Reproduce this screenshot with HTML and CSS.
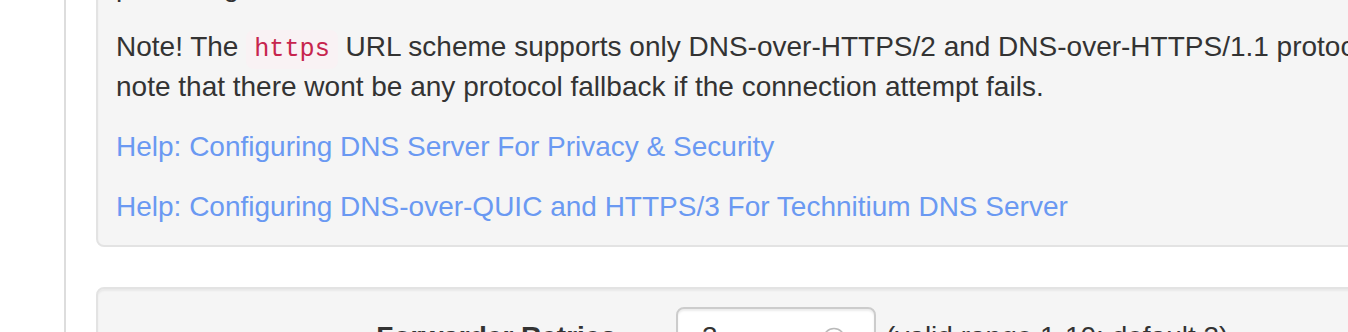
FILE: index.html
```html
<!DOCTYPE html>
<html lang="en">
<head>
<meta charset="utf-8">
<title>DNS Settings</title>
<link rel="stylesheet" href="styles.css">
</head>
<body>
<div class="page">
  <aside class="sidebar"></aside>
  <main class="main">
    <div class="scroll">
      <section class="well">
        <p>protocol given in the forwarder URL scheme.</p>
        <p>Note! The <code>https</code> URL scheme supports only DNS-over-HTTPS/2 and DNS-over-HTTPS/1.1 protocols. The <code>h3</code> URL scheme supports only DNS-over-HTTPS/3 protocol. Please<br>note that there wont be any protocol fallback if the connection attempt fails.</p>
        <p><a href="#">Help: Configuring DNS Server For Privacy &amp; Security</a></p>
        <p class="last"><a href="#">Help: Configuring DNS-over-QUIC and HTTPS/3 For Technitium DNS Server</a></p>
      </section>
      <section class="well">
        <div class="form-row">
          <label class="control-label" for="retries">Forwarder Retries</label>
          <div class="input" id="retries">
            <span class="value">3</span>
            <svg class="spin" width="24" height="24" viewBox="0 0 24 24" aria-hidden="true">
              <circle cx="12" cy="12" r="10.5" fill="#fff" stroke="#b9b9b9" stroke-width="1.5"/>
              <path d="M8 10.5 L12 6.5 L16 10.5" fill="none" stroke="#333" stroke-width="2"/>
              <path d="M8 13.5 L12 17.5 L16 13.5" fill="none" stroke="#333" stroke-width="2"/>
            </svg>
          </div>
          <div class="help-text">(valid range 1-10; default 3)</div>
        </div>
      </section>
    </div>
  </main>
</div>
</body>
</html>
```

FILE: styles.css
```css
html, body {
  margin: 0;
  padding: 0;
  background: #ffffff;
  overflow: hidden;
}

body {
  font-family: "Liberation Sans", Arial, Helvetica, sans-serif;
  font-size: 28px;
  line-height: 40px;
  color: #333333;
}

.page {
  display: flex;
  height: 332px;
  overflow: hidden;
}

.sidebar {
  flex: 0 0 64px;
  border-right: 2px solid #dddddd;
}

.main {
  flex: 0 0 auto;
  padding-left: 30px;
}

.scroll {
  margin-top: -53px;
  width: 2520px;
}

.well {
  background: #f5f5f5;
  border: 2px solid #e3e3e3;
  border-radius: 8px;
  box-shadow: inset 0 2px 2px rgba(0, 0, 0, 0.05);
  padding: 18px;
  margin-bottom: 40px;
}

.well p {
  margin: 0 0 20px;
}

.well p.last {
  margin-bottom: 0;
}

code {
  font-family: "Liberation Mono", Menlo, monospace;
  font-size: 25.2px;
  line-height: 1;
  color: #c7254e;
  background: #f9f2f4;
  padding: 5px 8px;
  border-radius: 8px;
}

a {
  color: #6a99f2;
  text-decoration: none;
}

.form-row {
  display: grid;
  grid-template-columns: 500px 200px auto;
  column-gap: 60px;
  align-items: start;
}

.control-label {
  font-weight: bold;
  text-align: right;
  padding-top: 10px;
}

.form-row .help-text {
  margin-left: -50px;
  padding-top: 10px;
}

.input {
  box-sizing: border-box;
  height: 68px;
  border: 2px solid #cccccc;
  border-radius: 8px;
  background: #ffffff;
  box-shadow: inset 0 2px 2px rgba(0, 0, 0, 0.075);
  padding: 8px 28px 8px 24px;
  display: flex;
  align-items: flex-start;
  justify-content: space-between;
}

.spin {
  display: block;
  margin-top: 10px;
}
```
